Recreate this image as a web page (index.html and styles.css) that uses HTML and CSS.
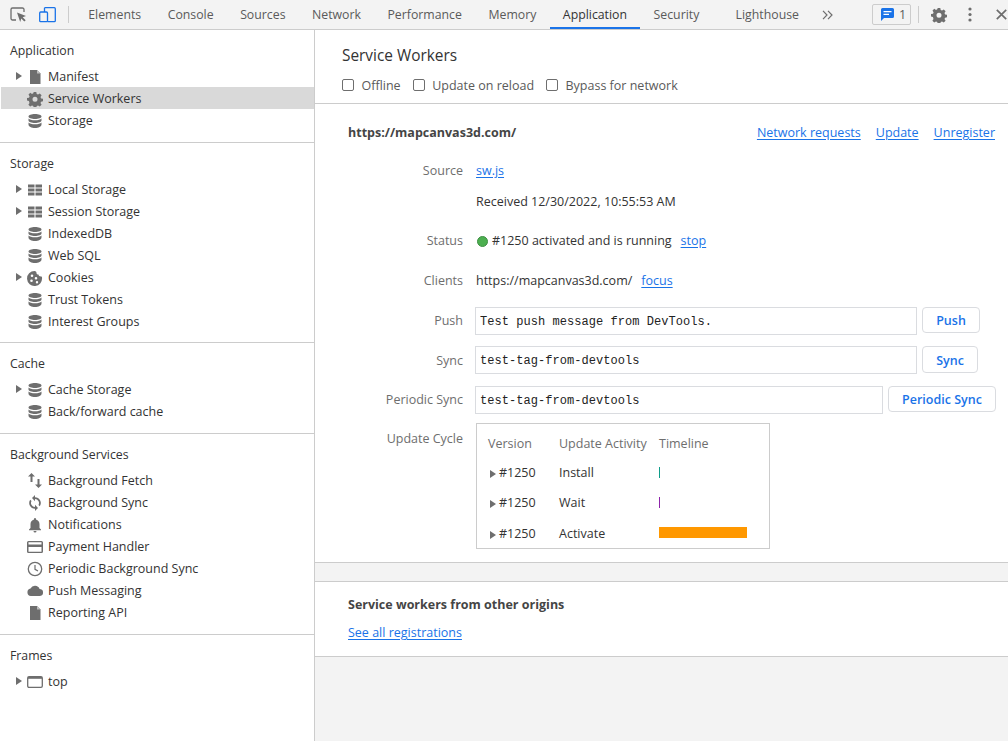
FILE: index.html
```html
<!DOCTYPE html>
<html lang="en">
<head>
<meta charset="utf-8">
<title>DevTools - Application</title>
<link rel="stylesheet" href="styles.css">
</head>
<body>
<svg class="sprite" width="0" height="0" aria-hidden="true">
  <symbol id="i-file" viewBox="0 0 16 16"><path d="M3 1h7l3.500 3.500V15H3z" fill="#6e6e6e"/><path d="M10 1v3.500h3.500" fill="#bdbdbd"/></symbol>
  <symbol id="i-gear" viewBox="0 0 16 16"><path fill-rule="evenodd" d="M6.700 1h2.600l.4 2 1.300.6 1.800-1.100 1.800 1.800-1.100 1.800.6 1.300 2 .4v2.500l-2 .4-.6 1.300 1.100 1.800-1.800 1.800-1.800-1.100-1.300.6-.4 2H6.700l-.4-2-1.300-.6-1.800 1.100-1.800-1.800 1.100-1.800L1.900 10 0 9.600V7.100l2-.4.6-1.300-1.100-1.800 1.800-1.800L5 2.900l1.300-.6zM8 5.800a2.500 2.500 0 1 0 0 5 2.500 2.500 0 0 0 0-5z" fill="#6e6e6e"/></symbol>
  <symbol id="i-db" viewBox="0 0 16 16"><g fill="#6e6e6e"><path d="M1.500 3.500C1.500 2 4.500 1 8 1s6.500 1 6.500 2.500S11.500 6 8 6 1.500 5 1.500 3.500z"/><path d="M1.500 5.500C2.500 6.700 5 7.300 8 7.300s5.500-.6 6.500-1.800v2C14.500 9 11.500 10 8 10S1.500 9 1.500 7.500z"/><path d="M1.500 9.500c1 1.200 3.500 1.800 6.500 1.800s5.500-.6 6.500-1.800v2C14.500 13.500 11.500 15 8 15s-6.500-1.500-6.500-3.500z"/></g></symbol>
  <symbol id="i-grid" viewBox="0 0 16 16"><path fill="#6e6e6e" d="M1 2.500h6.500v3H1zM8.500 2.500H15v3H8.500zM1 6.500h6.500v3H1zM8.500 6.500H15v3H8.500zM1 10.500h6.500v3H1zM8.500 10.500H15v3H8.500z"/></symbol>
  <symbol id="i-cookie" viewBox="0 0 16 16"><path fill-rule="evenodd" fill="#6e6e6e" d="M7.500 1C9 1 9.500 2 9.500 3c0 1 1 1.500 2 1.500 0 1.200 1 2 2.500 2 .7 0 1 .3 1 1A7.500 7.500 0 1 1 7.500 1zM5 4.500a1.300 1.300 0 1 0 0 2.600 1.300 1.300 0 0 0 0-2.600zM9 7a1.300 1.300 0 1 0 0 2.600A1.300 1.300 0 0 0 9 7zM4.500 9.500a1.300 1.300 0 1 0 0 2.600 1.300 1.300 0 0 0 0-2.600zM10 11a1.200 1.200 0 1 0 0 2.400 1.200 1.200 0 0 0 0-2.400z"/></symbol>
  <symbol id="i-updown" viewBox="0 0 16 16"><path fill="#6e6e6e" d="M4.500 0 8 3.500H5.500V9h-2V3.500H1zM11.500 15 8 11.500h2.500V6h2v5.500H15z"/></symbol>
  <symbol id="i-sync" viewBox="0 0 16 16"><path fill="#6e6e6e" d="M8 0v2.200a5.800 5.800 0 0 1 4.800 9l-1.300-1.300A4 4 0 0 0 8 4v2.200L5 3.100zM8 16v-2.200a5.800 5.800 0 0 1-4.800-9l1.300 1.300A4 4 0 0 0 8 12V9.800l3 3.100z"/></symbol>
  <symbol id="i-bell" viewBox="0 0 16 16"><path fill="#6e6e6e" d="M8 1a1 1 0 0 1 1 1v.6c2.200.6 3.500 2.400 3.500 4.700V11l1.500 1.500v.7H2v-.7L3.500 11V7.300C3.500 5 4.800 3.200 7 2.600V2a1 1 0 0 1 1-1zM6.500 14h3a1.500 1.500 0 0 1-3 0z"/></symbol>
  <symbol id="i-card" viewBox="0 0 16 16"><path fill-rule="evenodd" fill="#6e6e6e" d="M1.500 2h13A1.500 1.500 0 0 1 16 3.500v9a1.500 1.500 0 0 1-1.500 1.500h-13A1.500 1.500 0 0 1 0 12.500v-9A1.500 1.500 0 0 1 1.500 2zm0 1.300v2.200h13V3.300zm0 4.700v4.700h13V8z"/></symbol>
  <symbol id="i-clock" viewBox="0 0 16 16"><circle cx="8" cy="8" r="6.700" fill="none" stroke="#6e6e6e" stroke-width="1.300"/><path d="M8 4v4.300l3 1.800" fill="none" stroke="#6e6e6e" stroke-width="1.200"/></symbol>
  <symbol id="i-cloud" viewBox="0 0 16 16"><path fill="#6e6e6e" d="M3.800 13a3.800 3.800 0 0 1-.3-7.500A5 5 0 0 1 12.600 6 3.500 3.500 0 0 1 12.500 13z"/></symbol>
  <symbol id="i-frame" viewBox="0 0 16 16"><rect x=".7" y="2.700" width="14.600" height="10.600" rx="1.300" fill="none" stroke="#6e6e6e" stroke-width="1.300"/><path d="M1 3h14v1.800H1z" fill="#6e6e6e"/></symbol>
</svg>

<header class="toolbar">
  <button class="tool-btn first" aria-label="Select an element">
    <svg width="17" height="17" viewBox="0 0 17 17"><path d="M6 14H2.500A1.500 1.500 0 0 1 1 12.500v-9A1.500 1.500 0 0 1 2.500 2h10A1.500 1.500 0 0 1 14 3.500V6" fill="none" stroke="#6e6e6e" stroke-width="1.300"/><path d="M7 6.500 16 10l-3.300 1.200 3 3-1.400 1.400-3-3L10.200 16z" fill="#6e6e6e"/></svg>
  </button>
  <button class="tool-btn second" aria-label="Toggle device toolbar">
    <svg width="17" height="17" viewBox="0 0 17 17"><path d="M5.500 1.700h9.800a1 1 0 0 1 1 1v12a1 1 0 0 1-1 1H8.500M5.500 1.700V6" fill="none" stroke="#1a73e8" stroke-width="1.300"/><rect x=".7" y="6" width="7.800" height="9.700" rx="1" fill="none" stroke="#1a73e8" stroke-width="1.300"/></svg>
  </button>
  <span class="tool-sep"></span>
  <nav class="tabs">
    <a class="tab">Elements</a>
    <a class="tab">Console</a>
    <a class="tab">Sources</a>
    <a class="tab">Network</a>
    <a class="tab">Performance</a>
    <a class="tab">Memory</a>
    <a class="tab active">Application</a>
    <a class="tab">Security</a>
    <a class="tab lighthouse">Lighthouse</a>
  </nav>
  <svg class="chevrons" width="11" height="10" viewBox="0 0 11 10"><path d="M1 .8 5 5 1 9.200M6 .8 10 5 6 9.200" fill="none" stroke="#6e6e6e" stroke-width="1.200"/></svg>
  <span class="spring"></span>
  <span class="badge">
    <svg width="13" height="13" viewBox="0 0 13 13"><path d="M1.500 0h10A1.500 1.500 0 0 1 13 1.500v7a1.500 1.500 0 0 1-1.500 1.500H3l-3 3V1.500A1.500 1.500 0 0 1 1.500 0z" fill="#1a73e8"/><path d="M2.500 3h8v1.200h-8zM2.500 5.700h5.500v1.200H2.500z" fill="#fff"/></svg>
    1
  </span>
  <span class="tool-sep right"></span>
  <svg class="tb-gear" width="16" height="16"><use href="#i-gear"/></svg>
  <svg class="tb-dots" width="4" height="15" viewBox="0 0 4 15"><circle cx="2" cy="2" r="1.600" fill="#6e6e6e"/><circle cx="2" cy="7.500" r="1.600" fill="#6e6e6e"/><circle cx="2" cy="13" r="1.600" fill="#6e6e6e"/></svg>
  <svg class="tb-close" width="11" height="11" viewBox="0 0 11 11"><path d="M.8.800l9.400 9.400M10.200.800.800 10.200" stroke="#6e6e6e" stroke-width="1.700"/></svg>
</header>

<div class="panes">
  <aside class="sidebar">
    <section class="side-section">
      <h2 class="side-title">Application</h2>
      <div class="row"><i class="arrow"></i><svg class="ico"><use href="#i-file"/></svg>Manifest</div>
      <div class="row selected"><svg class="ico"><use href="#i-gear"/></svg>Service Workers</div>
      <div class="row"><svg class="ico"><use href="#i-db"/></svg>Storage</div>
    </section>
    <section class="side-section">
      <h2 class="side-title">Storage</h2>
      <div class="row"><i class="arrow"></i><svg class="ico"><use href="#i-grid"/></svg>Local Storage</div>
      <div class="row"><i class="arrow"></i><svg class="ico"><use href="#i-grid"/></svg>Session Storage</div>
      <div class="row"><svg class="ico"><use href="#i-db"/></svg>IndexedDB</div>
      <div class="row"><svg class="ico"><use href="#i-db"/></svg>Web SQL</div>
      <div class="row"><i class="arrow"></i><svg class="ico"><use href="#i-cookie"/></svg>Cookies</div>
      <div class="row"><svg class="ico"><use href="#i-db"/></svg>Trust Tokens</div>
      <div class="row"><svg class="ico"><use href="#i-db"/></svg>Interest Groups</div>
    </section>
    <section class="side-section">
      <h2 class="side-title">Cache</h2>
      <div class="row"><i class="arrow"></i><svg class="ico"><use href="#i-db"/></svg>Cache Storage</div>
      <div class="row"><svg class="ico"><use href="#i-db"/></svg>Back/forward cache</div>
    </section>
    <section class="side-section">
      <h2 class="side-title">Background Services</h2>
      <div class="row"><svg class="ico"><use href="#i-updown"/></svg>Background Fetch</div>
      <div class="row"><svg class="ico"><use href="#i-sync"/></svg>Background Sync</div>
      <div class="row"><svg class="ico"><use href="#i-bell"/></svg>Notifications</div>
      <div class="row"><svg class="ico"><use href="#i-card"/></svg>Payment Handler</div>
      <div class="row"><svg class="ico"><use href="#i-clock"/></svg>Periodic Background Sync</div>
      <div class="row"><svg class="ico"><use href="#i-cloud"/></svg>Push Messaging</div>
      <div class="row"><svg class="ico"><use href="#i-file"/></svg>Reporting API</div>
    </section>
    <section class="side-section">
      <h2 class="side-title">Frames</h2>
      <div class="row"><i class="arrow"></i><svg class="ico"><use href="#i-frame"/></svg>top</div>
    </section>
  </aside>

  <main class="main">
    <div class="head">
      <h1 class="head-title">Service Workers</h1>
      <div class="checks">
        <label class="check"><input type="checkbox">Offline</label>
        <label class="check"><input type="checkbox">Update on reload</label>
        <label class="check"><input type="checkbox">Bypass for network</label>
      </div>
    </div>

    <section class="sw">
      <div class="sw-top">
        <strong class="origin">https://mapcanvas3d.com/</strong>
        <div class="sw-links">
          <a class="link">Network requests</a>
          <a class="link">Update</a>
          <a class="link">Unregister</a>
        </div>
      </div>

      <div class="fields">
        <div class="lbl">Source</div>
        <div class="val"><a class="link">sw.js</a></div>
        <div class="lbl"></div>
        <div class="val">Received 12/30/2022, 10:55:53 AM</div>
        <div class="lbl">Status</div>
        <div class="val"><span class="dot"></span>#1250 activated and is running<a class="link gap">stop</a></div>
        <div class="lbl">Clients</div>
        <div class="val">https://mapcanvas3d.com/<a class="link gap">focus</a></div>
        <div class="lbl">Push</div>
        <div class="val field-push"><input class="txt w-push" value="Test push message from DevTools."><button class="btn b-push">Push</button></div>
        <div class="lbl">Sync</div>
        <div class="val field-sync"><input class="txt w-push" value="test-tag-from-devtools"><button class="btn b-sync">Sync</button></div>
        <div class="lbl">Periodic Sync</div>
        <div class="val field-push"><input class="txt w-periodic" value="test-tag-from-devtools"><button class="btn b-periodic">Periodic Sync</button></div>
        <div class="lbl">Update Cycle</div>
        <div class="val field-cycle">
          <div class="cycle">
            <div class="cy-row cy-head"><span>Version</span><span>Update Activity</span><span>Timeline</span></div>
            <div class="cy-row"><span class="ver"><i class="arrow small"></i>#1250</span><span>Install</span><span class="tl"><i class="bar install"></i></span></div>
            <div class="cy-row"><span class="ver"><i class="arrow small"></i>#1250</span><span>Wait</span><span class="tl"><i class="bar wait"></i></span></div>
            <div class="cy-row r3"><span class="ver"><i class="arrow small"></i>#1250</span><span>Activate</span><span class="tl"><i class="bar activate"></i></span></div>
          </div>
        </div>
      </div>
    </section>

    <section class="other">
      <strong class="other-title">Service workers from other origins</strong>
      <a class="link other-link">See all registrations</a>
    </section>
  </main>
</div>
</body>
</html>
```

FILE: styles.css
```css
* { box-sizing: border-box; }
html, body { height: 100%; }
body {
  margin: 0;
  height: 741px;
  overflow: hidden;
  display: flex;
  flex-direction: column;
  background: #fff;
  color: #303942;
  font-family: "Open Sans", "Noto Sans", sans-serif;
  font-size: 12.5px;
  line-height: 16px;
}
.sprite { position: absolute; }

.toolbar {
  flex: none;
  height: 30px;
  display: flex;
  align-items: center;
  background: #f3f3f3;
  border-bottom: 1px solid #ccc;
}
.tool-btn {
  border: 0;
  background: none;
  padding: 0;
  width: 17px;
  height: 17px;
  display: block;
}
.tool-btn.first { margin-left: 10px; }
.tool-btn.second { margin-left: 12px; }
.tool-sep {
  width: 1px;
  height: 17px;
  background: #ccc;
  margin-left: 12px;
}
.tool-sep.right { margin-left: 7px; }
.tabs { display: flex; align-self: stretch; margin-left: 6px; font-size: 12.3px; }
.tab {
  display: flex;
  align-items: center;
  padding: 3px 13.250px 0;
  color: #5a5a5a;
  height: 29px;
  border-bottom: 2px solid transparent;
}
.tab.active { color: #333; border-bottom-color: #1a73e8; }
.tab.lighthouse { padding-left: 23px; }
.chevrons { margin-left: 10px; }
.spring { flex: 1; }
.badge {
  display: flex;
  align-items: center;
  gap: 5px;
  width: 39px;
  height: 21px;
  padding-left: 8px;
  border: 1px solid #ccc;
  border-radius: 2px;
  color: #5a5a5a;
}
.tb-gear { margin-left: 12px; }
.tb-dots { margin-left: 21px; }
.tb-close { margin-left: 24px; margin-right: 1px; }

.panes { flex: 1; display: flex; min-height: 0; }
.sidebar {
  flex: none;
  width: 315px;
  border-right: 1px solid #ccc;
  overflow: hidden;
}
.side-section { padding-bottom: 11px; border-bottom: 1px solid #ccc; }
.side-section:nth-child(2) { padding-bottom: 10px; }
.side-section:last-child { border-bottom: 0; }
.side-title {
  margin: 0;
  height: 35px;
  padding: 13px 0 0 10px;
  font-size: 12.3px;
  font-weight: 400;
  line-height: 16px;
  color: #333;
}
.row {
  position: relative;
  display: flex;
  align-items: center;
  height: 22px;
  margin-left: 1px;
  padding-left: 26px;
  padding-top: 1px;
  color: #333;
}
.row.selected { background: #d9d9d9; }
.ico { width: 16px; height: 16px; margin-right: 5px; flex: none; }
.arrow {
  position: absolute;
  left: 15px;
  top: 7px;
  width: 0;
  height: 0;
  border-left: 6px solid #6e6e6e;
  border-top: 4px solid transparent;
  border-bottom: 4px solid transparent;
}

.main { flex: 1; min-width: 0; background: #f3f3f3; }
.head {
  height: 74px;
  background: #fff;
  padding: 15px 0 0 27px;
  border-bottom: 1px solid #ccc;
}
.head-title { margin: 0; font-size: 15.400px; line-height: 22px; font-weight: 400; color: #333; }
.checks { display: flex; margin-top: 11px; }
.check { display: flex; align-items: center; margin-right: 12px; color: #5a5a5a; }
.check input {
  appearance: none;
  width: 12px;
  height: 12px;
  margin: 0 7.500px 2px 0;
  border: 1px solid #6e6e6e;
  border-radius: 2px;
  background: #fff;
}

.sw {
  height: 459px;
  background: #fff;
  border-bottom: 1px solid #ccc;
  padding: 21px 13px 0 33px;
}
.sw-top { display: flex; justify-content: space-between; }
.origin { font-weight: 700; color: #454545; }
.sw-links { display: flex; gap: 15px; }
.link { color: #1a73e8; text-decoration: underline; text-underline-offset: 2px; }

.fields {
  display: grid;
  grid-template-columns: 115px 1fr;
  column-gap: 13px;
  margin-top: 22px;
  grid-template-rows: 31px 39px 40px 40px 40px 39px 39px auto;
}
.lbl { color: #6e6e6e; text-align: right; }
.val { display: flex; align-items: flex-start; color: #333; }
.gap { margin-left: 9px; }
.dot {
  width: 11px;
  height: 11px;
  margin: 3px 4px 0 1px;
  border-radius: 50%;
  background: #4caf50;
  border: 1px solid #3f8f43;
}
.field-push { margin-top: -6px; }
.field-sync { margin-top: -7px; }
.field-cycle { margin-top: -8px; }
.txt {
  height: 28px;
  margin-left: -1px;
  border: 1px solid #dadce0;
  padding: 2px 4px 0;
  font-family: "Liberation Mono", monospace;
  font-size: 12px;
  letter-spacing: .05px;
  color: #222;
  background: #fff;
  border-radius: 0;
}
.w-push { width: 442px; }
.w-periodic { width: 408px; }
.btn {
  height: 26px;
  margin-left: 5px;
  padding: 2px 0 0;
  border: 1px solid #dadce0;
  border-radius: 4px;
  background: #fff;
  color: #1a73e8;
  font: 600 12.500px/16px "Open Sans", sans-serif;
}
.b-push { width: 58px; }
.b-sync { width: 56px; height: 27px; }
.b-periodic { width: 108px; }

.cycle {
  width: 294px;
  height: 126px;
  border: 1px solid #ccc;
  padding: 1px 0 0 11px;
}
.cy-row {
  display: grid;
  grid-template-columns: 71px 100px 1fr;
  align-items: center;
  height: 30px;
}
.cy-head { height: 20px; margin-top: 9px; margin-bottom: 4px; color: #6e6e6e; }
.r3 { height: 31px; }
.ver { position: relative; padding-left: 11px; }
.arrow.small { left: 2px; top: 5px; }
.tl { display: flex; align-items: center; height: 100%; }
.bar { display: block; height: 11px; margin-top: -2px; }
.install { width: 1px; background: #0f9d8a; }
.wait { width: 1px; background: #8e24aa; }
.activate { width: 88px; background: #ff9800; }

.other {
  margin-top: 18px;
  height: 76px;
  background: #fff;
  border-top: 1px solid #ccc;
  border-bottom: 1px solid #ccc;
  padding: 15px 0 0 33px;
  display: flex;
  flex-direction: column;
  align-items: flex-start;
}
.other-title { font-weight: 700; color: #454545; }
.other-link { margin-top: 12px; }
```
